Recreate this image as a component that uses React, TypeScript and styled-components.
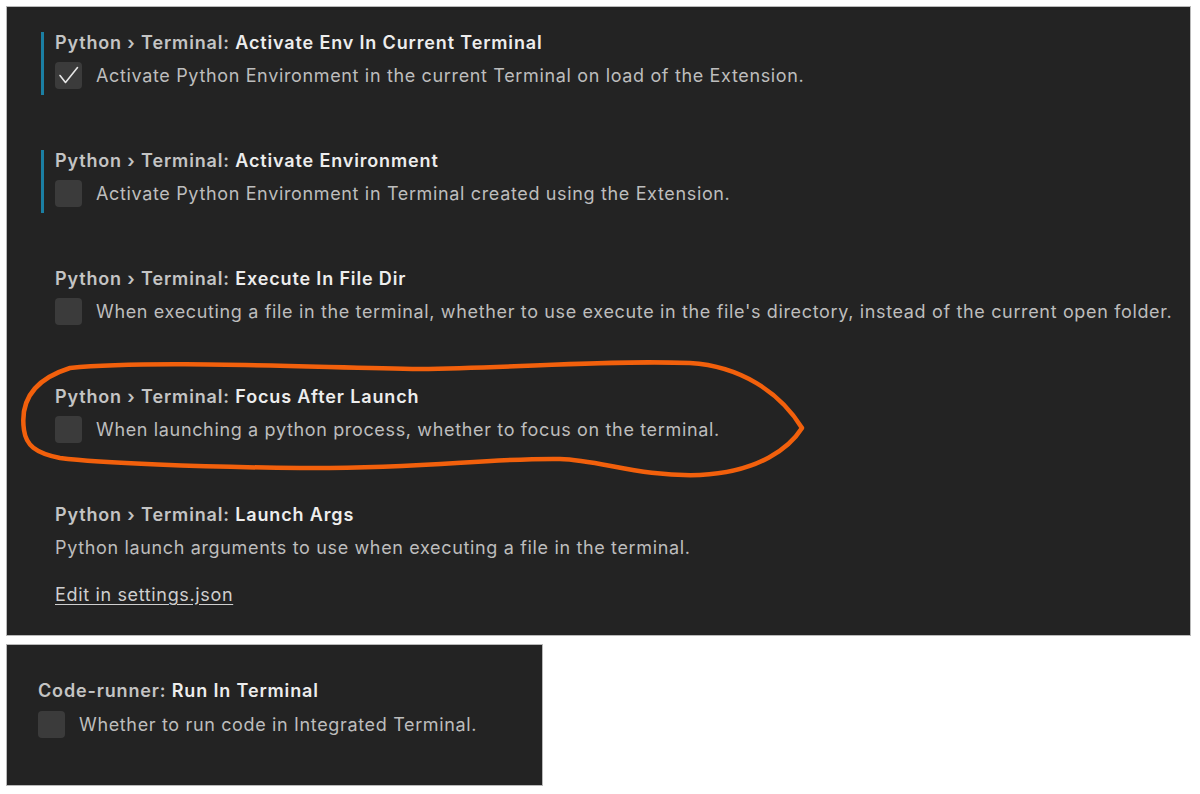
import React from 'react';
import styled, { createGlobalStyle } from 'styled-components';

const GlobalStyle = createGlobalStyle`
  html, body {
    margin: 0;
    padding: 0;
    background: #ffffff;
  }
  body {
    font-family: Inter, "Open Sans", "Liberation Sans", sans-serif;
    -webkit-font-smoothing: antialiased;
  }
`;

interface Setting {
  category: string;
  name: string;
  description: string;
  checkbox?: boolean;
  checked?: boolean;
  modified?: boolean;
  link?: string;
}

const pythonSettings: Setting[] = [
  {
    category: 'Python › Terminal: ',
    name: 'Activate Env In Current Terminal',
    description: 'Activate Python Environment in the current Terminal on load of the Extension.',
    checkbox: true,
    checked: true,
    modified: true,
  },
  {
    category: 'Python › Terminal: ',
    name: 'Activate Environment',
    description: 'Activate Python Environment in Terminal created using the Extension.',
    checkbox: true,
    modified: true,
  },
  {
    category: 'Python › Terminal: ',
    name: 'Execute In File Dir',
    description:
      "When executing a file in the terminal, whether to use execute in the file's directory, instead of the current open folder.",
    checkbox: true,
  },
  {
    category: 'Python › Terminal: ',
    name: 'Focus After Launch',
    description: 'When launching a python process, whether to focus on the terminal.',
    checkbox: true,
  },
  {
    category: 'Python › Terminal: ',
    name: 'Launch Args',
    description: 'Python launch arguments to use when executing a file in the terminal.',
    link: 'Edit in settings.json',
  },
];

export default function App() {
  return (
    <>
      <GlobalStyle />
      <Page>
        <TopPanel>
          {pythonSettings.map((s) => (
            <SettingItem key={s.name}>
              <ModifiedBar $modified={!!s.modified} />
              <SettingBody>
                <Title>
                  <Category>{s.category}</Category>
                  <Key>{s.name}</Key>
                </Title>
                <DescRow>
                  {s.checkbox && <Checkbox checked={!!s.checked} />}
                  <Description>{s.description}</Description>
                </DescRow>
                {s.link && <EditLink href="#">{s.link}</EditLink>}
              </SettingBody>
            </SettingItem>
          ))}
          <Scribble viewBox="0 0 1200 794" aria-hidden="true">
            <path
              d="M 24 430
                 C 20 402 32 380 70 368
                 C 150 360 300 367 420 369
                 C 520 368 600 360 690 363
                 C 740 366 780 392 802 428
                 C 790 447 760 472 700 475
                 C 640 477 600 460 560 459
                 C 480 458 430 469 300 468
                 C 200 467 100 463 60 458
                 C 35 453 26 445 24 430 Z"
              fill="none"
              stroke="#f2600c"
              strokeWidth="4.5"
              strokeLinejoin="round"
            />
          </Scribble>
        </TopPanel>

        <BottomPanel>
          <Title>
            <Category>Code-runner: </Category>
            <Key>Run In Terminal</Key>
          </Title>
          <DescRow $loose>
            <Checkbox checked={false} />
            <Description>Whether to run code in Integrated Terminal.</Description>
          </DescRow>
        </BottomPanel>
      </Page>
    </>
  );
}

function Checkbox({ checked }: { checked: boolean }) {
  return (
    <CheckBox>
      {checked && (
        <svg width="27" height="27" viewBox="0 0 27 27">
          <path d="M5 13.5 L10.5 20.5 L22.5 5.5" fill="none" stroke="#e6e6e6" strokeWidth="1.6" strokeLinecap="round" strokeLinejoin="round" />
        </svg>
      )}
    </CheckBox>
  );
}

const Page = styled.div`
  padding: 6px;
  display: flex;
  flex-direction: column;
  gap: 8px;
  align-items: flex-start;
`;

const TopPanel = styled.div`
  position: relative;
  box-sizing: border-box;
  width: 1185px;
  height: 630px;
  background: #232323;
  border: 1px solid #b9b9b9;
  padding: 25px 0 0 34px;
  display: flex;
  flex-direction: column;
  gap: 55px;
`;

const SettingItem = styled.div`
  display: flex;
  gap: 11px;
`;

const ModifiedBar = styled.div<{ $modified: boolean }>`
  width: 3px;
  flex-shrink: 0;
  background: ${(p) => (p.$modified ? '#1b7fa3' : 'transparent')};
`;

const SettingBody = styled.div`
  display: flex;
  flex-direction: column;
  padding-bottom: 6px;
`;

const Title = styled.div`
  font-size: 18px;
  line-height: 22px;
  font-weight: 600;
  letter-spacing: 0.85px;
  white-space: nowrap;
`;

const Category = styled.span`
  color: #c4c4c4;
`;

const Key = styled.span`
  color: #ededed;
`;

const DescRow = styled.div<{ $loose?: boolean }>`
  margin-top: ${(p) => (p.$loose ? '9px' : '8px')};
  display: flex;
  align-items: center;
  gap: 14px;
  min-height: 27px;
`;

const CheckBox = styled.div`
  width: 27px;
  height: 27px;
  flex-shrink: 0;
  box-sizing: border-box;
  border-radius: 4px;
  background: #3b3b3b;
  display: flex;
  align-items: center;
  justify-content: center;
`;

const Description = styled.div`
  font-size: 18px;
  line-height: 27px;
  letter-spacing: 0.65px;
  color: #bdbdbd;
  white-space: nowrap;
`;

const EditLink = styled.a`
  margin-top: 20px;
  font-size: 18px;
  line-height: 27px;
  letter-spacing: 0.65px;
  color: #cfcfcf;
  text-decoration: underline;
  text-underline-offset: 3px;
  align-self: flex-start;
`;

const Scribble = styled.svg`
  position: absolute;
  left: -7px;
  top: -7px;
  width: 1200px;
  height: 794px;
  pointer-events: none;
`;

const BottomPanel = styled.div`
  box-sizing: border-box;
  width: 537px;
  height: 142px;
  background: #232323;
  border: 1px solid #b9b9b9;
  padding: 35px 0 0 31px;
  display: flex;
  flex-direction: column;
`;
